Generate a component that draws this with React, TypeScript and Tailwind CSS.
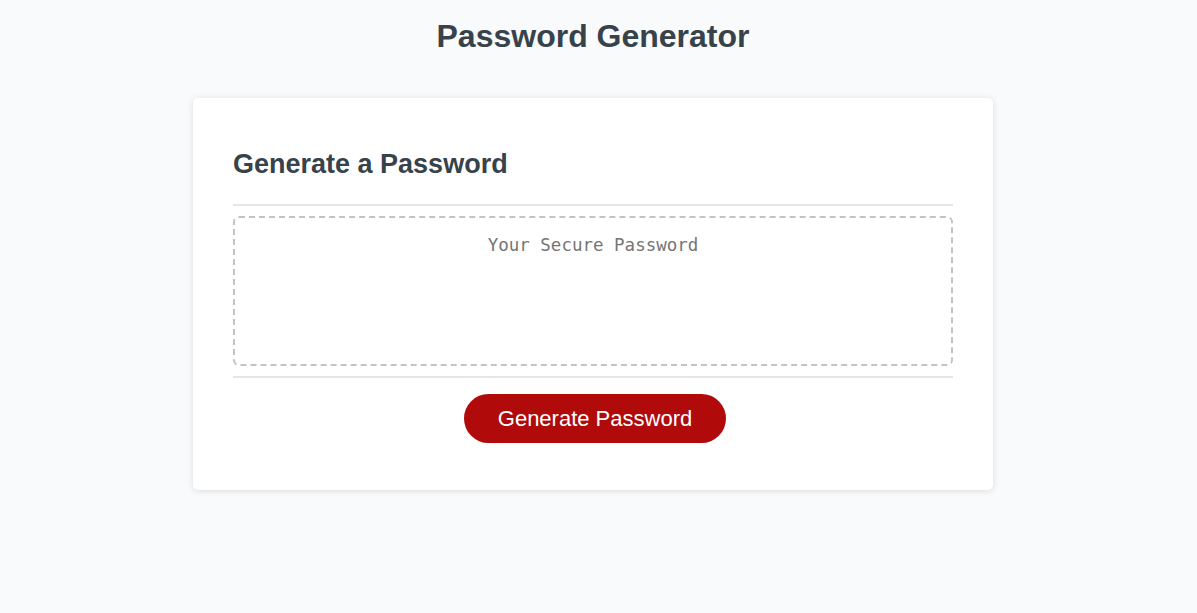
import React from 'react';

export default function App() {
  return (
    <div className="min-h-[613px] bg-[#f9fafb] pt-[17px] pr-[11px] font-['Liberation_Sans',Arial,sans-serif]">
      <h1 className="text-center text-[32px] leading-[38px] font-bold text-[#37424b]">
        Password Generator
      </h1>

      <div className="mx-auto mt-[43px] w-[800px] rounded-[5px] bg-white px-10 pt-[50px] pb-[47px] shadow-[0_1px_6px_rgba(0,0,0,0.12)]">
        <h2 className="text-[27px] leading-[32px] font-bold text-[#37424b]">Generate a Password</h2>

        <div className="mt-6 h-[2px] bg-[#e5e5e5]" />

        <textarea
          readOnly
          placeholder="Your Secure Password"
          className="mt-[10px] block h-[150px] w-full resize-none rounded-[6px] border-2 border-dashed border-[#c0c4c8] pt-[16px] text-center font-['DejaVu_Sans_Mono',monospace] text-[17.5px] leading-[22px] text-[#555] placeholder:text-[#757575] outline-none"
        />

        <div className="mt-[10px] h-[2px] bg-[#e5e5e5]" />

        <div className="mt-4 flex justify-center pl-1">
          <button className="h-[49px] w-[262px] rounded-full bg-[#b00a0b] text-[22px] text-white">
            Generate Password
          </button>
        </div>
      </div>
    </div>
  );
}
